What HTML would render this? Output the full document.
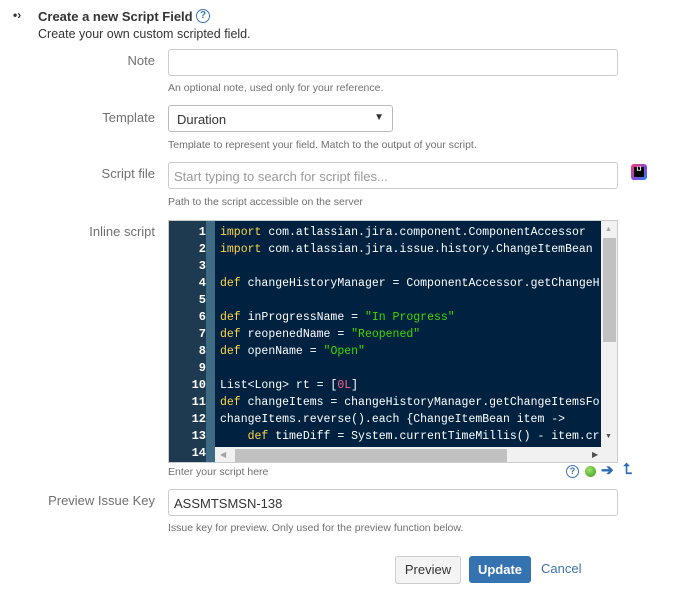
<!DOCTYPE html>
<html><head><style>
body{margin:0;width:673px;height:596px;background:#fff;font-family:"Liberation Sans",Arial,sans-serif;color:#333;position:relative;overflow:hidden}
.a{position:absolute}
.lbl{position:absolute;right:518px;font-size:13px;color:#707070;text-align:right}
.inp{position:absolute;left:168px;width:448px;height:26px;border:1px solid #ccc;border-radius:3px;background:#fff;font-size:13px;box-sizing:border-box;padding:6px 5px}
.desc{position:absolute;left:168px;font-size:10.5px;color:#707070}
.ed{position:absolute;left:168px;top:220px;width:450px;height:243px;border:1px solid #ccc;background:#002240;overflow:hidden;box-sizing:border-box}
.gut{position:absolute;left:0;top:0;width:37px;height:243px;background:#1e3a50}
.stripe{position:absolute;left:37px;top:0;width:9px;height:243px;background:#3f6a84}
.code{position:absolute;left:0;top:3px;font-family:"Liberation Mono",monospace;font-size:11.5px;line-height:17px;white-space:pre;color:#fff}
.ln{position:absolute;left:0;width:37px;text-align:right;top:3px;font-family:"Liberation Mono",monospace;font-size:12px;font-weight:bold;line-height:17px;color:#fff;white-space:pre}
.k{color:#ffd54a}.s{color:#3ad900}.n{color:#ff628c}
</style></head><body>
<div class="a" style="left:13px;top:8px;font-size:12px;font-weight:bold;color:#333">•›</div>
<div class="a" style="left:38px;top:9px;font-size:13px;font-weight:bold;color:#333">Create a new Script Field</div>
<div class="a" style="left:196px;top:9px;width:12px;height:12px;border:1.5px solid #3b73af;border-radius:50%;color:#3b73af;font-size:10px;font-weight:bold;text-align:center;line-height:12px">?</div>
<div class="a" style="left:38px;top:27px;font-size:12.5px;color:#333">Create your own custom scripted field.</div>

<div class="lbl" style="top:53px">Note</div>
<div class="inp" style="top:49px;height:27px;width:450px"></div>
<div class="desc" style="top:82px">An optional note, used only for your reference.</div>

<div class="lbl" style="top:110px">Template</div>
<div class="inp" style="top:105px;width:225px;height:27px;padding-left:8px;border-color:#bbb">Duration<span style="position:absolute;right:8px;top:6px;font-size:10px">▼</span></div>
<div class="desc" style="top:139px">Template to represent your field. Match to the output of your script.</div>

<div class="lbl" style="top:166px">Script file</div>
<div class="inp" style="top:162px;height:27px;width:450px;color:#999">Start typing to search for script files...</div>
<div class="a" style="left:631px;top:164px;width:16px;height:16px;background:linear-gradient(135deg,#fc3c6c,#7d4be0 60%,#1e8ff0);border-radius:3px"><div style="position:absolute;left:3px;top:3px;width:10px;height:10px;background:#000;color:#fff;font-size:6px;font-weight:bold;line-height:7px;text-align:center">IJ</div></div>
<div class="desc" style="top:196px">Path to the script accessible on the server</div>

<div class="lbl" style="top:224px">Inline script</div>
<div class="ed">
<div class="gut"></div><div class="stripe"></div>
<div class="ln">1
2
3
4
5
6
7
8
9
10
11
12
13
14</div>
<div class="code" style="left:51px"><span class="k">import</span> com.atlassian.jira.component.ComponentAccessor
<span class="k">import</span> com.atlassian.jira.issue.history.ChangeItemBean

<span class="k">def</span> changeHistoryManager = ComponentAccessor.getChangeH

<span class="k">def</span> inProgressName = <span class="s">"In Progress"</span>
<span class="k">def</span> reopenedName = <span class="s">"Reopened"</span>
<span class="k">def</span> openName = <span class="s">"Open"</span>

List&lt;Long&gt; rt = [<span class="n">0L</span>]
<span class="k">def</span> changeItems = changeHistoryManager.getChangeItemsFo
changeItems.reverse().each {ChangeItemBean item -&gt;
    <span class="k">def</span> timeDiff = System.currentTimeMillis() - item.cr</div>
<div class="a" style="left:432px;top:0;width:17px;height:243px;background:#f1f1f1"></div>
<div class="a" style="left:434px;top:17px;width:13px;height:104px;background:#c1c1c1"></div>
<div class="a" style="left:436px;top:5px;font-size:7px;color:#a3a3a3">▲</div>
<div class="a" style="left:436px;top:212px;font-size:7px;color:#505050">▼</div>
<div class="a" style="left:46px;top:226px;width:386px;height:17px;background:#f1f1f1"></div>
<div class="a" style="left:66px;top:228px;width:272px;height:13px;background:#c1c1c1"></div>
<div class="a" style="left:51px;top:229px;font-size:8px;color:#a3a3a3">◀</div>
<div class="a" style="left:423px;top:229px;font-size:8px;color:#505050">▶</div>
</div>
<div class="desc" style="top:466px">Enter your script here</div>
<div class="a" style="left:566px;top:465px;width:11px;height:11px;border:1.5px solid #3b73af;border-radius:50%;color:#3b73af;font-size:9px;font-weight:bold;text-align:center;line-height:11px">?</div>
<div class="a" style="left:585px;top:466px;width:11px;height:11px;border-radius:50%;background:radial-gradient(circle at 40% 35%,#9be36a,#3a9a14)"></div>
<div class="a" style="left:601px;top:461px;font-size:15px;color:#2e6db4;font-weight:bold">➔</div>
<div class="a" style="left:623px;top:461px;font-size:15px;color:#2e6db4;font-weight:bold">⮤</div>

<div class="lbl" style="top:493px">Preview Issue Key</div>
<div class="inp" style="top:489px;height:27px;width:450px;color:#333">ASSMTSMSN-138</div>
<div class="desc" style="top:522px">Issue key for preview. Only used for the preview function below.</div>

<div class="a" style="left:395px;top:556px;width:64px;height:26px;border:1px solid #ccc;border-radius:3px;background:#f4f4f4;font-size:13px;text-align:center;line-height:26px;color:#333">Preview</div>
<div class="a" style="left:469px;top:556px;width:62px;height:27px;border-radius:3px;background:#3572b0;font-size:13px;font-weight:bold;text-align:center;line-height:27px;color:#fff">Update</div>
<div class="a" style="left:541px;top:561px;font-size:13px;color:#3b73af">Cancel</div>
</body></html>
